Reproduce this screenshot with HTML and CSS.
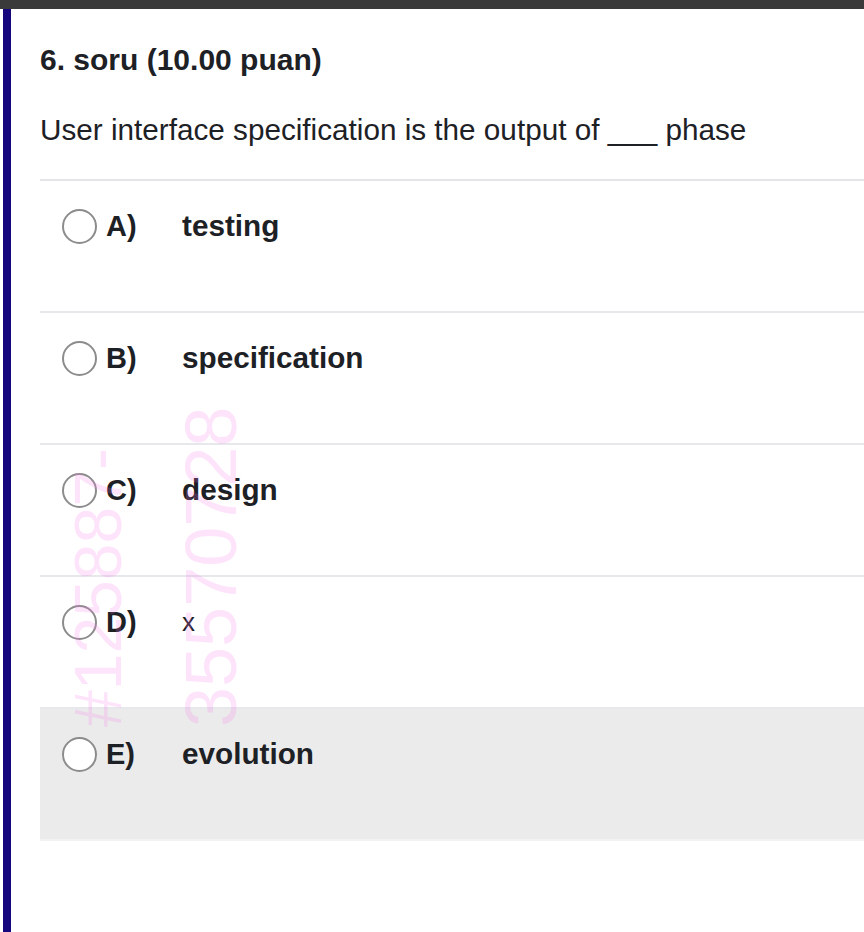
FILE: index.html
```html
<!DOCTYPE html>
<html>
<head>
<meta charset="utf-8">
<link rel="stylesheet" href="styles.css">
</head>
<body>
<div class="topbar"></div>
<div class="page">
  <div class="que">
    <h3 class="qno">6. soru (10.00 puan)</h3>
    <div class="qtext">User interface specification is the output of ___ phase</div>
    <div class="answers">
      <div class="opt"><span class="radio"></span><span class="letter">A)</span><span class="atext">testing</span></div>
      <div class="opt"><span class="radio"></span><span class="letter">B)</span><span class="atext">specification</span></div>
      <div class="opt"><span class="radio"></span><span class="letter">C)</span><span class="atext">design</span></div>
      <div class="opt"><span class="radio"></span><span class="letter">D)</span><span class="atext plain">x</span></div>
      <div class="opt hover"><span class="radio"></span><span class="letter">E)</span><span class="atext">evolution</span></div>
    </div>
    <div class="wm wm1">#125887-</div>
    <div class="wm wm2">35570728</div>
  </div>
</div>
</body>
</html>
```
FILE: styles.css
```css
html, body {
  margin: 0;
  padding: 0;
  background: #fff;
}
body {
  font-family: "Liberation Sans", Arial, sans-serif;
  color: #1d2125;
  width: 864px;
  height: 932px;
  overflow: hidden;
}
.topbar {
  height: 9px;
  background: #3a3a3a;
}
.page {
  margin-left: 3px;
  border-left: 8px solid #15067e;
  height: 923px;
}
.que {
  position: relative;
  padding-left: 29px;
}
.qno {
  margin: 0;
  padding-top: 34px;
  font-size: 30px;
  font-weight: bold;
  line-height: 34px;
}
.qtext {
  margin-top: 36px;
  font-size: 29.7px;
  line-height: 34px;
  padding-bottom: 32px;
  border-bottom: 2px solid #e3e5e8;
}
.opt {
  border-bottom: 2px solid #e6e8eb;
  display: flex;
  align-items: flex-start;
  padding-top: 28px;
  box-sizing: border-box;
  height: 132px;
}
.opt.hover {
  background: #ebebeb;
  border-bottom: 2px solid #f2f2f2;
}
.radio {
  width: 31px;
  height: 31px;
  border: 2px solid #8c8c8c;
  border-radius: 50%;
  background: #fff;
  margin-left: 22px;
  flex: none;
  box-sizing: content-box;
}
.letter {
  font-size: 29px;
  font-weight: bold;
  line-height: 34px;
  margin-left: 9px;
  width: 76px;
}
.atext {
  font-size: 29.7px;
  font-weight: bold;
  line-height: 34px;
}
.atext.plain {
  font-weight: normal;
  font-size: 26px;
}
.wm {
  position: absolute;
  font-family: "Liberation Sans", Arial, sans-serif;
  color: rgba(245, 120, 235, 0.2);
  font-size: 66px;
  line-height: 66px;
  white-space: nowrap;
  transform-origin: left top;
  transform: rotate(-90deg);
  pointer-events: none;
}
.wm1 {
  left: 54px;
  top: 718px;
}
.wm2 {
  left: 164px;
  top: 718px;
  font-size: 72px;
  line-height: 72px;
}
```
